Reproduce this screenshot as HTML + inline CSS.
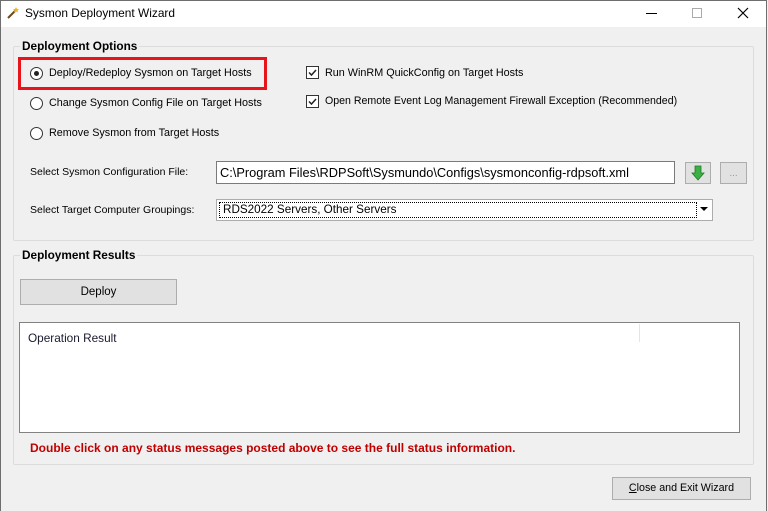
<!DOCTYPE html>
<html><head><meta charset="utf-8"><style>
*{margin:0;padding:0;box-sizing:border-box}
body{width:768px;height:511px;background:#f0f0f0;font-family:"Liberation Sans",sans-serif;font-size:10.8px;color:#000;position:relative;overflow:hidden}
.a{position:absolute;white-space:nowrap}
.win{position:absolute;left:0;top:0;width:767px;height:511px;border:1px solid #6e6e6e;border-bottom:none}
.title{position:absolute;left:1px;top:1px;width:765px;height:26px;background:#fff}
.grp{position:absolute;border:1px solid #dcdcdc;border-radius:2px}
.lg{position:absolute;background:#f0f0f0;font-weight:bold;font-size:11.8px;padding:0 2px}
.rad{position:absolute;width:13px;height:13px;border:1px solid #333;border-radius:50%;background:#fff}
.chk{position:absolute;width:13px;height:13px;border:1px solid #333;background:#fff}
.btn{position:absolute;background:#e1e1e1;border:1px solid #adadad;text-align:center}
.inp{position:absolute;background:#fff;border:1px solid #7a7a7a;padding-left:3px;font-size:12.8px}
</style></head><body>
<div class="win"></div>
<div class="title"></div>
<svg class="a" style="left:6px;top:6px" width="14" height="14" viewBox="0 0 14 14"><line x1="2" y1="12" x2="9" y2="5" stroke="#6b4a1e" stroke-width="2"/><path d="M10 1l1 2 2 0-1.5 1.5.5 2-2-1-2 1 .5-2L7 3h2z" fill="#f0b020"/></svg>
<div class="a" style="left:25px;top:6px;font-size:11.9px">Sysmon Deployment Wizard</div>
<div class="a" style="left:646px;top:13px;width:11px;height:1px;background:#000"></div>
<div class="a" style="left:692px;top:8px;width:10px;height:10px;border:1px solid #aaa"></div>
<svg class="a" style="left:737px;top:7px" width="12" height="12"><path d="M1 1L11 11M11 1L1 11" stroke="#000" stroke-width="1.2"/></svg>

<div class="grp" style="left:13px;top:46px;width:741px;height:195px"></div>
<div class="lg" style="left:20px;top:39px">Deployment Options</div>
<div class="a" style="left:18px;top:57px;width:249px;height:33px;border:3px solid #e8141c"></div>
<div class="rad" style="left:30px;top:67px"><div style="position:absolute;left:3px;top:3px;width:5px;height:5px;border-radius:50%;background:#222"></div></div>
<div class="a" style="left:49px;top:67px">Deploy/Redeploy Sysmon on Target Hosts</div>
<div class="rad" style="left:30px;top:97px"></div>
<div class="a" style="left:49px;top:97px">Change Sysmon Config File on Target Hosts</div>
<div class="rad" style="left:30px;top:127px"></div>
<div class="a" style="left:49px;top:127px">Remove Sysmon from Target Hosts</div>
<div class="chk" style="left:306px;top:66px"><svg width="11" height="11" style="position:absolute;left:0;top:0"><path d="M2 5.5l2.5 2.5 4.5-5" stroke="#222" stroke-width="1.5" fill="none"/></svg></div>
<div class="a" style="left:325px;top:67px">Run WinRM QuickConfig on Target Hosts</div>
<div class="chk" style="left:306px;top:95px"><svg width="11" height="11" style="position:absolute;left:0;top:0"><path d="M2 5.5l2.5 2.5 4.5-5" stroke="#222" stroke-width="1.5" fill="none"/></svg></div>
<div class="a" style="left:325px;top:95px;font-size:10.6px">Open Remote Event Log Management Firewall Exception (Recommended)</div>
<div class="a" style="left:30px;top:166px;font-size:10.5px">Select Sysmon Configuration File:</div>
<div class="inp" style="left:216px;top:161px;width:459px;height:23px;line-height:21px">C:\Program Files\RDPSoft\Sysmundo\Configs\sysmonconfig-rdpsoft.xml</div>
<div class="btn" style="left:685px;top:162px;width:26px;height:22px"><svg width="14" height="16" style="margin-top:2px" viewBox="0 0 14 16"><path d="M4 1h6v7h3l-6 7-6-7h3z" fill="#3cb043" stroke="#1e7a28" stroke-width="0.8"/></svg></div>
<div class="btn" style="left:720px;top:162px;width:27px;height:22px;color:#999;font-size:10px;line-height:22px">...</div>
<div class="a" style="left:30px;top:204px;font-size:10.5px">Select Target Computer Groupings:</div>
<div class="inp" style="left:216px;top:199px;width:497px;height:22px;border-color:#acacac;padding:2px;font-size:11.7px"><div style="border:1px dotted #000;height:16px;width:478px;line-height:14px;padding-left:3px">RDS2022 Servers, Other Servers</div></div>
<svg class="a" style="left:700px;top:207px" width="8" height="5"><path d="M0 0h8L4 4z" fill="#000"/></svg>

<div class="grp" style="left:13px;top:255px;width:741px;height:210px"></div>
<div class="lg" style="left:20px;top:248px">Deployment Results</div>
<div class="btn" style="left:20px;top:279px;width:157px;height:26px;line-height:24px;font-size:11.5px">Deploy</div>
<div class="a" style="left:19px;top:322px;width:721px;height:111px;background:#fff;border:1px solid #828282"></div>
<div class="a" style="left:639px;top:324px;width:1px;height:18px;background:#e5e5e5"></div>
<div class="a" style="left:28px;top:331px;color:#1a1a2e;font-size:11.8px">Operation Result</div>
<div class="a" style="left:30px;top:441px;color:#c00000;font-weight:bold;font-size:12px">Double click on any status messages posted above to see the full status information.</div>
<div class="btn" style="left:612px;top:477px;width:139px;height:23px;line-height:21px;font-size:10.7px"><u>C</u>lose and Exit Wizard</div>
</body></html>
